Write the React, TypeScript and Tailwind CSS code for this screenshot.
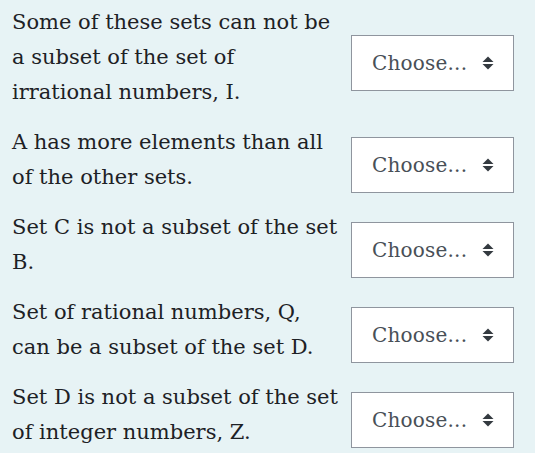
const ROWS = [
  { id: 1, text: 'Some of these sets can not be a subset of the set of irrational numbers, I.' },
  { id: 2, text: 'A has more elements than all of the other sets.' },
  { id: 3, text: 'Set C is not a subset of the set B.' },
  { id: 4, text: 'Set of rational numbers, Q, can be a subset of the set D.' },
  { id: 5, text: 'Set D is not a subset of the set of integer numbers, Z.' },
];

function Chevrons() {
  return (
    <svg className="h-[16px] w-[12px]" viewBox="0 0 12 16" fill="#343a40">
      <path d="M6 1.5 L11.5 7 H0.5 Z" />
      <path d="M0.5 9 H11.5 L6 14.5 Z" />
    </svg>
  );
}

export default function App() {
  return (
    <div className="h-[453px] w-[535px] overflow-hidden bg-[#e7f3f5] pl-3 pt-[5px] font-['DejaVu_Serif',serif] text-[#1d2125]">
      {ROWS.map(row => (
        <div key={row.id} className="flex items-center pb-[15px]">
          <div className="w-[327px] shrink-0 text-[21px] leading-[35px]">{row.text}</div>
          <div className="ml-[12px] mt-[10px] flex h-[56px] w-[163px] items-center justify-between border border-[#8f959e] bg-white pl-[20px] pr-[19px] text-[20px] text-[#495057]">
            <span className="tracking-[0.2px]">Choose...</span>
            <Chevrons />
          </div>
        </div>
      ))}
    </div>
  );
}
